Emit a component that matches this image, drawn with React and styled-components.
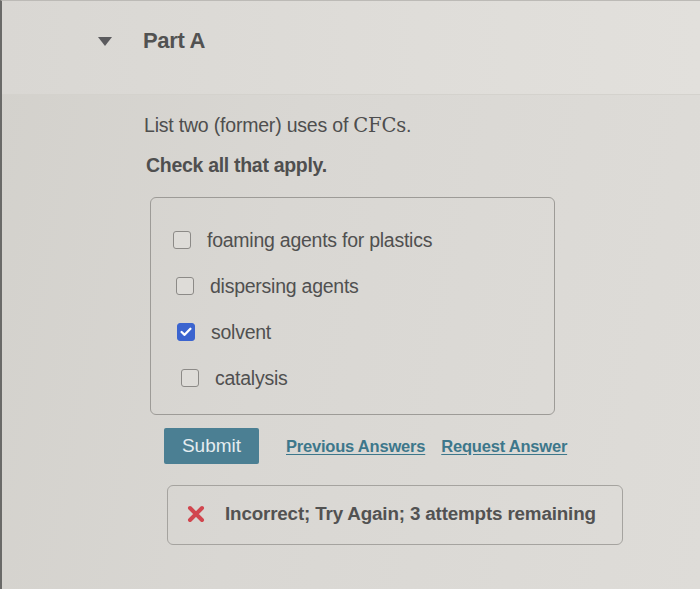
import React from "react";
import styled, { createGlobalStyle } from "styled-components";

const Global = createGlobalStyle`
  html, body { margin: 0; padding: 0; }
  body {
    width: 700px; height: 589px; overflow: hidden;
    background: linear-gradient(100deg, #d3d1cc 0%, #d9d7d3 40%, #dedcd8 100%);
    font-family: "Liberation Sans", Arial, sans-serif;
  }
`;

const Page = styled.div`
  width: 698px; height: 588px;
  border-left: 2px solid #6a6a68;
  border-top: 1px solid #bcbab6;
  display: flex; flex-direction: column;
`;

const Header = styled.div`
  height: 94px;
  display: flex; align-items: flex-start;
  padding: 27px 0 0 96px;
  box-sizing: border-box;
  background: linear-gradient(90deg, #d9d7d3 0%, #dfddd9 60%, #e2e0dc 100%);
  border-bottom: 1px solid #d4d2cd;
`;

const Caret = styled.span`
  width: 0; height: 0;
  border-left: 7px solid transparent;
  border-right: 7px solid transparent;
  border-top: 9px solid #5b5b5e;
  margin-top: 9px;
  margin-right: 31px;
`;

const Title = styled.h2`
  margin: 0; font-size: 22px; font-weight: bold; color: #525252;
  letter-spacing: -0.3px;
`;

const Body = styled.div`
  padding: 19px 0 0 142px;
  display: flex; flex-direction: column; align-items: flex-start;
`;

const Question = styled.p`
  margin: 0; font-size: 19.5px; color: #4e4e4e; letter-spacing: -0.2px;
`;

const Math = styled.span`
  font-family: "DejaVu Serif", "Liberation Serif", serif; font-size: 19.5px;
`;

const Instruction = styled.p`
  margin: 17px 0 0 2px; font-size: 19.5px; font-weight: bold; color: #4f4f4f;
  letter-spacing: -0.3px;
`;

const OptionsBox = styled.div`
  margin: 20px 0 0 6px;
  width: 405px; height: 218px; box-sizing: border-box;
  border: 1.5px solid #9d9b97; border-radius: 6px;
  padding: 31px 0 0 22px;
  display: flex; flex-direction: column; gap: 24px;
`;

const Option = styled.label`
  display: flex; align-items: center; gap: 16px;
  padding-left: ${p => p.$indent}px;
  font-size: 19.5px; color: #505050; height: 22px; letter-spacing: -0.25px;
`;

const Box = styled.span`
  width: 18px; height: 18px; box-sizing: border-box; border-radius: 3px;
  border: 1.5px solid ${p => (p.$checked ? "#3b64cf" : "#8c8a87")};
  background: ${p => (p.$checked ? "#3b64cf" : "#dedcd8")};
  display: inline-flex; align-items: center; justify-content: center;
  flex: none;
`;

const Actions = styled.div`
  margin: 13px 0 0 20px;
  display: flex; align-items: center;
`;

const SubmitButton = styled.button`
  width: 95px; height: 36px; border: none; border-radius: 2px;
  background: #4b7f93; color: #e4ecef;
  font-family: "Liberation Sans", Arial, sans-serif; font-size: 19px;
  margin-right: 27px; padding: 0;
`;

const LinkText = styled.a`
  font-size: 16.5px; font-weight: bold; color: #3d778b;
  text-decoration: underline; text-underline-offset: 2px;
  margin-right: 16px; letter-spacing: -0.2px;
`;

const Feedback = styled.div`
  margin: 21px 0 0 23px;
  width: 456px; height: 60px; box-sizing: border-box;
  border: 1.5px solid #a5a39f; border-radius: 6px;
  display: flex; align-items: center; gap: 20px;
  padding: 0 0 2px 19px;
`;

const FeedbackText = styled.span`
  font-size: 18.8px; font-weight: bold; color: #525252; letter-spacing: -0.15px;
`;

const options = [
  { label: "foaming agents for plastics", indent: 0 },
  { label: "dispersing agents", indent: 3 },
  { label: "solvent", indent: 4, checked: true },
  { label: "catalysis", indent: 8 },
];

export default function App() {
  return (
    <>
      <Global />
      <Page>
        <Header>
          <Caret />
          <Title>Part A</Title>
        </Header>
        <Body>
          <Question>
            List two (former) uses of <Math>CFCs</Math>.
          </Question>
          <Instruction>Check all that apply.</Instruction>
          <OptionsBox>
            {options.map(o => (
              <Option key={o.label} $indent={o.indent}>
                <Box $checked={o.checked}>
                  {o.checked && (
                    <svg width="12" height="10" viewBox="0 0 12 10">
                      <path d="M1.6 5 L4.6 7.8 L10.4 1.8" fill="none" stroke="#fff" strokeWidth="2.3" strokeLinecap="round" strokeLinejoin="round" />
                    </svg>
                  )}
                </Box>
                {o.label}
              </Option>
            ))}
          </OptionsBox>
          <Actions>
            <SubmitButton>Submit</SubmitButton>
            <LinkText href="#">Previous Answers</LinkText>
            <LinkText href="#">Request Answer</LinkText>
          </Actions>
          <Feedback>
            <svg width="18" height="18" viewBox="0 0 18 18">
              <path d="M3 3 L15 15 M15 3 L3 15" stroke="#d1464e" strokeWidth="4" strokeLinecap="round" />
            </svg>
            <FeedbackText>Incorrect; Try Again; 3 attempts remaining</FeedbackText>
          </Feedback>
        </Body>
      </Page>
    </>
  );
}
